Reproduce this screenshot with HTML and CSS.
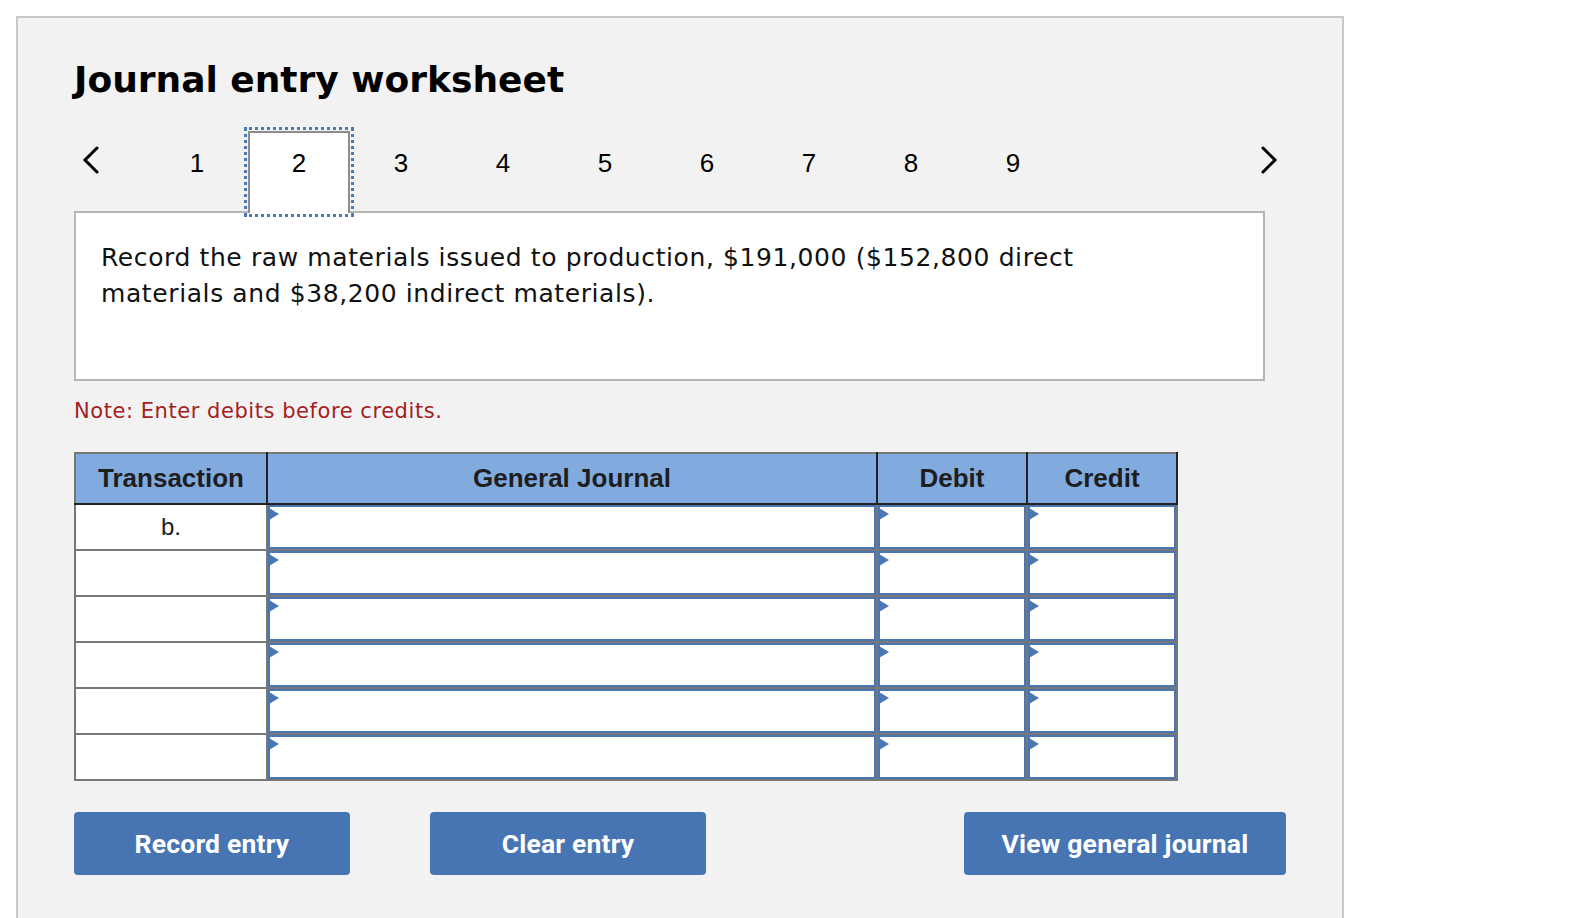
FILE: index.html
```html
<!DOCTYPE html>
<html lang="en">
<head>
    <meta charset="UTF-8">
    <meta name="viewport" content="width=device-width, initial-scale=1.0">
    <title>Journal entry worksheet</title>
    <link rel="stylesheet" href="styles.css">
</head>
<body>
    <div class="worksheet">
        <h1 class="worksheet-title">Journal entry worksheet</h1>

        <nav class="step-nav">
            <button class="step-arrow" aria-label="Previous">
                <svg width="18" height="28" viewBox="0 0 18 28"><path d="M15 2 L3 14 L15 26" fill="none" stroke="#000" stroke-width="3" stroke-linecap="round" stroke-linejoin="miter"/></svg>
            </button>
            <button class="step">1</button>
            <button class="step active">2</button>
            <button class="step">3</button>
            <button class="step">4</button>
            <button class="step">5</button>
            <button class="step">6</button>
            <button class="step">7</button>
            <button class="step">8</button>
            <button class="step">9</button>
            <button class="step-arrow next" aria-label="Next">
                <svg width="18" height="28" viewBox="0 0 18 28"><path d="M3 2 L15 14 L3 26" fill="none" stroke="#000" stroke-width="3" stroke-linecap="round" stroke-linejoin="miter"/></svg>
            </button>
        </nav>

        <div class="question">
            <p class="question-text">Record the raw materials issued to production, $191,000 ($152,800 direct materials and $38,200 indirect materials).</p>
        </div>

        <p class="note">Note: Enter debits before credits.</p>

        <table class="journal">
            <thead>
                <tr>
                    <th class="col-trans">Transaction</th>
                    <th class="col-account">General Journal</th>
                    <th class="col-amount">Debit</th>
                    <th class="col-amount">Credit</th>
                </tr>
            </thead>
            <tbody>
                <tr>
                    <td class="trans">b.</td>
                    <td class="entry"><div class="field"></div></td>
                    <td class="entry"><div class="field"></div></td>
                    <td class="entry"><div class="field"></div></td>
                </tr>
                <tr>
                    <td class="trans"></td>
                    <td class="entry"><div class="field"></div></td>
                    <td class="entry"><div class="field"></div></td>
                    <td class="entry"><div class="field"></div></td>
                </tr>
                <tr>
                    <td class="trans"></td>
                    <td class="entry"><div class="field"></div></td>
                    <td class="entry"><div class="field"></div></td>
                    <td class="entry"><div class="field"></div></td>
                </tr>
                <tr>
                    <td class="trans"></td>
                    <td class="entry"><div class="field"></div></td>
                    <td class="entry"><div class="field"></div></td>
                    <td class="entry"><div class="field"></div></td>
                </tr>
                <tr>
                    <td class="trans"></td>
                    <td class="entry"><div class="field"></div></td>
                    <td class="entry"><div class="field"></div></td>
                    <td class="entry"><div class="field"></div></td>
                </tr>
                <tr>
                    <td class="trans"></td>
                    <td class="entry"><div class="field"></div></td>
                    <td class="entry"><div class="field"></div></td>
                    <td class="entry"><div class="field"></div></td>
                </tr>
            </tbody>
        </table>

        <div class="actions">
            <button class="action-btn">Record entry</button>
            <button class="action-btn">Clear entry</button>
            <button class="action-btn wide">View general journal</button>
        </div>
    </div>
</body>
</html>
```

FILE: styles.css
```css
* {
    margin: 0;
    padding: 0;
    box-sizing: border-box;
}

body {
    font-family: "DejaVu Sans", Verdana, sans-serif;
    background-color: #fff;
    color: #000;
}

.worksheet {
    margin: 16px 0 0 16px;
    width: 1328px;
    height: 940px;
    padding: 40px 56px 0;
    background-color: #f2f2f2;
    border: 2px solid #c8c8c8;
}

.worksheet-title {
    font-size: 36px;
    line-height: 44px;
    font-weight: bold;
}

/* Step navigation */
.step-nav {
    display: flex;
    align-items: flex-start;
    width: 1212px;
    height: 80px;
    margin-top: 29px;
    position: relative;
    z-index: 1;
}

.step-nav button {
    background: none;
    border: none;
    cursor: pointer;
    color: #000;
}

.step-arrow {
    width: 72px;
    height: 80px;
    display: flex;
    align-items: flex-start;
    padding: 15px 0 0 8px;
}

.step-arrow.next {
    width: 26px;
    margin-left: auto;
    padding-left: 0;
}

.step {
    width: 102px;
    height: 80px;
    display: flex;
    align-items: flex-start;
    justify-content: center;
    padding-top: 17px;
    font-family: "Liberation Sans", Arial, sans-serif;
    font-size: 26px;
    line-height: 30px;
}

.step-nav .step.active {
    height: 82px;
    background-color: #fff;
    border: 2px solid #8c8c8c;
    border-bottom: none;
    padding-top: 15px;
    outline: 3px dotted #4a7ab8;
    outline-offset: 1px;
}

/* Question box */
.question {
    width: 1191px;
    height: 170px;
    background-color: #fff;
    border: 2px solid #b5b5b5;
    padding: 27px 25px 0;
}

.question-text {
    max-width: 1010px;
    font-size: 25px;
    line-height: 36px;
    letter-spacing: 0.6px;
    color: #111;
}

.note {
    margin-top: 18px;
    font-size: 21px;
    line-height: 24px;
    letter-spacing: 0.55px;
    color: #a4201e;
}

/* Journal table */
.journal {
    margin-top: 29px;
    width: 1103px;
    border-collapse: collapse;
    table-layout: fixed;
    font-family: "Liberation Sans", Arial, sans-serif;
    border: 2px solid #777;
}

.journal th {
    height: 51px;
    background-color: #81abdf;
    color: #1e1e1e;
    font-size: 26px;
    font-weight: bold;
    border-top: 2px solid #777;
    border-left: 2px solid #222;
    border-right: 2px solid #222;
    border-bottom: 2px solid #222;
}

.journal th:first-child {
    border-left-color: #777;
}

.col-trans {
    width: 192px;
}

.col-account {
    width: 610px;
}

.col-amount {
    width: 150px;
}

.journal td {
    height: 46px;
    border: 2px solid #777;
    background-color: #fff;
}

.trans {
    text-align: center;
    font-size: 24px;
    color: #222;
}

.entry {
    padding: 0;
}

.field {
    position: relative;
    height: 44px;
    border: 2px solid #4a76b4;
    background-color: #fff;
}

.field::before {
    content: '';
    position: absolute;
    top: 1px;
    left: -1px;
    border-left: 10px solid #4a76b4;
    border-top: 6px solid transparent;
    border-bottom: 6px solid transparent;
}

/* Action buttons */
.actions {
    display: flex;
    width: 1212px;
    margin-top: 31px;
    gap: 80px;
}

.action-btn {
    width: 276px;
    height: 63px;
    background-color: #4775b3;
    color: #fff;
    border: none;
    border-radius: 4px;
    font-family: Roboto, "Liberation Sans", sans-serif;
    font-size: 26.5px;
    font-weight: bold;
    letter-spacing: 0.2px;
    cursor: pointer;
}

.action-btn.wide {
    width: 322px;
    margin-left: auto;
}
```
